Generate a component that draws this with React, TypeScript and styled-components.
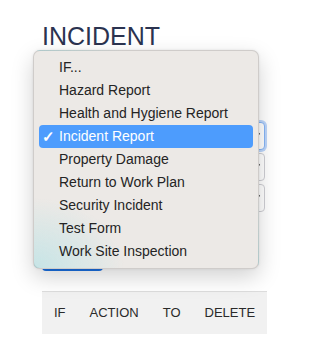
import styled, { createGlobalStyle } from "styled-components";

// GLOBAL ----------------------------------->

const GlobalStyle = createGlobalStyle`
  html, body {
    margin: 0;
    padding: 0;
    background: #ffffff;
    font-family: "Liberation Sans", Arial, sans-serif;
  }
`;

// PAGE ----------------------------------->

const Page = styled.div`
  position: relative;
  width: 314px;
  height: 353px;
  overflow: hidden;
  padding: 21px 0 0 42px;
  box-sizing: border-box;
`;

const Title = styled.h1`
  margin: 0;
  font-size: 25px;
  line-height: 30px;
  font-weight: 400;
  color: #2b3350;
`;

const Form = styled.div`
  display: flex;
  flex-direction: column;
  gap: 3px;
  width: 223px;
  margin-top: 71px;
`;

const Select = styled.div<{ $focused?: boolean }>`
  position: relative;
  height: 28px;
  border: 1px solid ${(p) => (p.$focused ? "#86b4f5" : "#cfcfd4")};
  border-radius: 4px;
  box-shadow: ${(p) => (p.$focused ? "0 0 0 2px #bcd6fb" : "none")};
  background: #fff;
  box-sizing: border-box;

  &::after {
    content: "";
    position: absolute;
    right: 4px;
    top: 11px;
    width: 5px;
    height: 1.5px;
    background: #444;
    transform: rotate(-45deg);
  }
`;

const SubmitButton = styled.div`
  width: 61px;
  height: 34px;
  margin-top: 25px;
  border-radius: 4px;
  background: #1a6fe0;
`;

const Table = styled.table`
  margin-top: 20px;
  width: 225px;
  border-collapse: collapse;
  background: #f1f1f1;
  border-top: 1px solid #dddddd;
`;

const HeadCell = styled.th`
  padding: 12px;
  font-size: 13px;
  line-height: 18px;
  font-weight: 400;
  color: #2a2a2a;
  text-align: left;
  white-space: nowrap;
`;

// DROPDOWN MENU ----------------------------------->

const Menu = styled.ul`
  position: absolute;
  left: 33px;
  top: 50px;
  width: 226px;
  margin: 0;
  padding: 5px;
  box-sizing: border-box;
  list-style: none;
  border-radius: 7px;
  border: 1px solid rgba(0, 0, 0, 0.12);
  background:
    radial-gradient(ellipse 90px 70px at 0% 100%, rgba(196, 228, 230, 0.95), rgba(196, 228, 230, 0) 100%),
    #ece9e6;
  box-shadow: 0 8px 22px rgba(0, 0, 0, 0.18), 0 0 3px rgba(0, 0, 0, 0.08);
`;

const MenuItem = styled.li<{ $selected?: boolean }>`
  position: relative;
  height: 23px;
  line-height: 23px;
  padding-left: 20px;
  border-radius: 4px;
  font-size: 14px;
  color: ${(p) => (p.$selected ? "#ffffff" : "#242424")};
  background: ${(p) => (p.$selected ? "#4d9cfd" : "transparent")};
  white-space: nowrap;
`;

const Check = styled.span`
  position: absolute;
  left: 3px;
  top: 0;
  font-size: 15px;
  font-weight: 700;
`;

const options = [
  "IF...",
  "Hazard Report",
  "Health and Hygiene Report",
  "Incident Report",
  "Property Damage",
  "Return to Work Plan",
  "Security Incident",
  "Test Form",
  "Work Site Inspection",
];

const App = () => {
  const selected = "Incident Report";

  return (
    <>
      <GlobalStyle />
      <Page>
        <Title>INCIDENT</Title>
        <Form>
          <Select $focused />
          <Select />
          <Select />
        </Form>
        <SubmitButton />
        <Table>
          <thead>
            <tr>
              <HeadCell>IF</HeadCell>
              <HeadCell>ACTION</HeadCell>
              <HeadCell>TO</HeadCell>
              <HeadCell>DELETE</HeadCell>
            </tr>
          </thead>
        </Table>

        <Menu>
          {options.map((opt) => (
            <MenuItem key={opt} $selected={opt === selected}>
              {opt === selected ? <Check>✓</Check> : null}
              {opt}
            </MenuItem>
          ))}
        </Menu>
      </Page>
    </>
  );
};

export default App;
